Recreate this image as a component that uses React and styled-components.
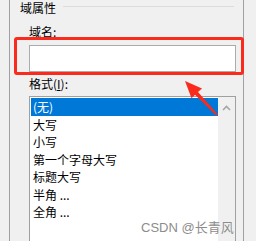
import React from "react";
import styled, { createGlobalStyle } from "styled-components";

const GlobalStyle = createGlobalStyle`
  html, body {
    margin: 0;
    padding: 0;
    background: #f0f0f0;
  }
`;

const Page = styled.div`
  position: relative;
  width: 256px;
  height: 241px;
  overflow: hidden;
  background: #f0f0f0;
  font-family: "Noto Sans CJK SC", "Noto Sans", sans-serif;
  font-size: 12px;
  color: #000;
`;

const Panel = styled.div`
  margin-left: 9px;
  width: 235px;
  height: 241px;
  border-left: 1px solid #a0a0a0;
  border-right: 1px solid #a0a0a0;
  display: flex;
  flex-direction: column;
  padding: 0 9px 0 19px;
  box-sizing: border-box;
`;

const GroupHeader = styled.div`
  display: flex;
  align-items: center;
  height: 14px;
  margin-left: -9px;
`;

const GroupTitle = styled.span`
  line-height: 14px;
  padding-top: 1px;
  white-space: nowrap;
`;

const GroupLine = styled.div`
  flex: 1;
  height: 1px;
  margin-left: 7px;
  margin-top: -1px;
  background: #dcdcdc;
`;

const FieldLabel = styled.div`
  line-height: 13px;
  margin-top: ${(p) => p.gap}px;
  white-space: nowrap;
`;

const Accel = styled.span`
  text-decoration: underline;
`;

const TextInput = styled.div`
  margin-top: 7px;
  height: 27px;
  width: 207px;
  box-sizing: border-box;
  background: #fff;
  border: 1px solid #ababab;
`;

const ListBox = styled.div`
  margin-top: 6px;
  width: 207px;
  flex: 1;
  box-sizing: border-box;
  border: 1px solid #a0a0a0;
  border-bottom: none;
  background: #fff;
  display: flex;
`;

const Items = styled.div`
  flex: 1;
  padding: 1px 0 0 1px;
  display: flex;
  flex-direction: column;
`;

const Item = styled.div`
  height: 17.5px;
  line-height: 17.5px;
  padding-left: 2px;
  white-space: nowrap;
  background: ${(p) => (p.selected ? "#0078d7" : "transparent")};
  color: ${(p) => (p.selected ? "#fff" : "#000")};
`;

const ScrollBar = styled.div`
  width: 17px;
  background: #f0f0f0;
  display: flex;
  justify-content: center;
  padding-top: 8px;
  box-sizing: border-box;
`;

const Highlight = styled.div`
  position: absolute;
  left: 14px;
  top: 37px;
  width: 230px;
  height: 38px;
  box-sizing: border-box;
  border: 3px solid #fa2a1c;
  border-radius: 3px;
  pointer-events: none;
`;

const Overlay = styled.svg`
  position: absolute;
  left: 0;
  top: 0;
  pointer-events: none;
`;

const Watermark = styled.div`
  position: absolute;
  left: 141px;
  top: 217px;
  font-family: "Liberation Sans", "Noto Sans CJK SC", sans-serif;
  font-size: 13px;
  color: #8c8c8c;
  white-space: nowrap;
  text-shadow: 0 0 1px #fff;
`;

const items = ["(无)", "大写", "小写", "第一个字母大写", "标题大写", "半角 ...", "全角 ..."];

export default function App() {
  return (
    <Page>
      <GlobalStyle />
      <Panel>
        <GroupHeader>
          <GroupTitle>域属性</GroupTitle>
          <GroupLine />
        </GroupHeader>
        <FieldLabel gap={11}>域名:</FieldLabel>
        <TextInput />
        <FieldLabel gap={5}>
          格式(<Accel>I</Accel>):
        </FieldLabel>
        <ListBox>
          <Items>
            {items.map((t, i) => (
              <Item key={t} selected={i === 0}>
                {t}
              </Item>
            ))}
          </Items>
          <ScrollBar>
            <svg width="9" height="6" viewBox="0 0 9 6">
              <path d="M1 5 L4.5 1.5 L8 5" fill="none" stroke="#a6a6a6" strokeWidth="1.6" />
            </svg>
          </ScrollBar>
        </ListBox>
      </Panel>
      <Highlight />
      <Overlay width="256" height="241" viewBox="0 0 256 241">
        <polygon
          points="185,81 202,88.5 198,92 217.6,114.3 216.4,115.7 195,94.8 191.5,98.2"
          fill="#fa2a1c"
        />
      </Overlay>
      <Watermark>CSDN @长青风</Watermark>
    </Page>
  );
}
